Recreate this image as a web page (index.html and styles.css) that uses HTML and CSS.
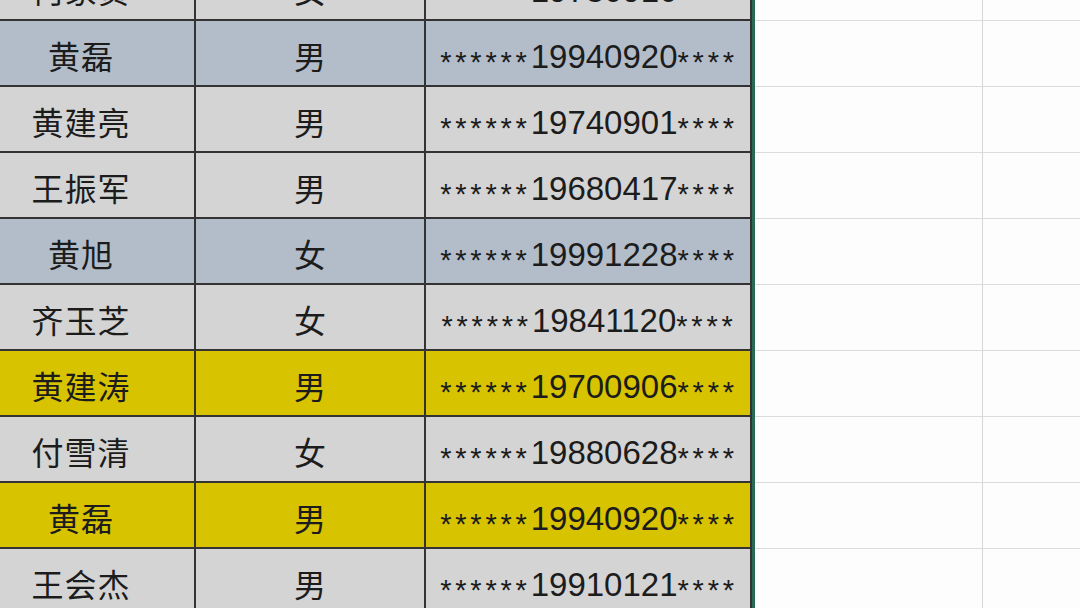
FILE: index.html
```html
<!DOCTYPE html>
<html lang="zh-CN">
<head>
<meta charset="utf-8">
<title>Sheet</title>
<link rel="stylesheet" href="styles.css">
</head>
<body>
<div class="sheet">
  <div class="row gray">
    <div class="c name">何家贵</div><div class="c sex">女</div><div class="c id"><span class="v"><span class="m">******</span>19780910<span class="m">****</span></span></div><div class="edge"></div><div class="w"></div><div class="w last"></div>
  </div>
  <div class="row blue">
    <div class="c name">黄磊</div><div class="c sex">男</div><div class="c id"><span class="v"><span class="m">******</span>19940920<span class="m">****</span></span></div><div class="edge"></div><div class="w"></div><div class="w last"></div>
  </div>
  <div class="row gray">
    <div class="c name">黄建亮</div><div class="c sex">男</div><div class="c id"><span class="v"><span class="m">******</span>19740901<span class="m">****</span></span></div><div class="edge"></div><div class="w"></div><div class="w last"></div>
  </div>
  <div class="row gray">
    <div class="c name">王振军</div><div class="c sex">男</div><div class="c id"><span class="v"><span class="m">******</span>19680417<span class="m">****</span></span></div><div class="edge"></div><div class="w"></div><div class="w last"></div>
  </div>
  <div class="row blue">
    <div class="c name">黄旭</div><div class="c sex">女</div><div class="c id"><span class="v"><span class="m">******</span>19991228<span class="m">****</span></span></div><div class="edge"></div><div class="w"></div><div class="w last"></div>
  </div>
  <div class="row gray">
    <div class="c name">齐玉芝</div><div class="c sex">女</div><div class="c id"><span class="v"><span class="m">******</span>19841120<span class="m">****</span></span></div><div class="edge"></div><div class="w"></div><div class="w last"></div>
  </div>
  <div class="row yellow">
    <div class="c name">黄建涛</div><div class="c sex">男</div><div class="c id"><span class="v"><span class="m">******</span>19700906<span class="m">****</span></span></div><div class="edge"></div><div class="w"></div><div class="w last"></div>
  </div>
  <div class="row gray">
    <div class="c name">付雪清</div><div class="c sex">女</div><div class="c id"><span class="v"><span class="m">******</span>19880628<span class="m">****</span></span></div><div class="edge"></div><div class="w"></div><div class="w last"></div>
  </div>
  <div class="row yellow">
    <div class="c name">黄磊</div><div class="c sex">男</div><div class="c id"><span class="v"><span class="m">******</span>19940920<span class="m">****</span></span></div><div class="edge"></div><div class="w"></div><div class="w last"></div>
  </div>
  <div class="row gray">
    <div class="c name">王会杰</div><div class="c sex">男</div><div class="c id"><span class="v"><span class="m">******</span>19910121<span class="m">****</span></span></div><div class="edge"></div><div class="w"></div><div class="w last"></div>
  </div>
</div>
</body>
</html>
```

FILE: styles.css
```css
html, body {
  margin: 0;
  padding: 0;
  background: #fdfdfd;
  overflow: hidden;
  width: 1080px;
  height: 608px;
}

.sheet {
  margin-top: -45px;
  display: flex;
  flex-direction: column;
  font-family: "Noto Sans CJK SC", "Liberation Sans", sans-serif;
  color: #1c1c1c;
}

.row {
  display: flex;
  height: 66px;
}

.c {
  box-sizing: border-box;
  height: 66px;
  border-bottom: 2px solid #333333;
  border-right: 2px solid #333333;
  display: flex;
  align-items: center;
  justify-content: center;
  padding-top: 3px;
  font-size: 32px;
  line-height: 1;
  white-space: nowrap;
}

.gray .c { background: #d4d4d4; }
.blue .c { background: #b3bdca; }
.yellow .c { background: #d8c300; }

.name {
  width: 196px;
  padding-right: 32px;
  letter-spacing: 1px;
}

.sex {
  width: 230px;
}

.id {
  width: 326px;
  font-family: "Liberation Sans", sans-serif;
  font-size: 33px;
  padding-left: 2px;
  padding-top: 6px;
}

.v {
  display: block;
  line-height: 33px;
  height: 33px;
}

.m {
  font-size: 29px;
  line-height: 0;
  letter-spacing: 3.8px;
  vertical-align: -0.15em;
}

.edge {
  width: 3px;
  background: #2a6a52;
}

.w {
  box-sizing: border-box;
  width: 228px;
  height: 66px;
  border-bottom: 1px solid #dcdcdc;
  border-right: 1px solid #d6d6d6;
}

.w.last {
  flex: 1;
  border-right: none;
}
```
